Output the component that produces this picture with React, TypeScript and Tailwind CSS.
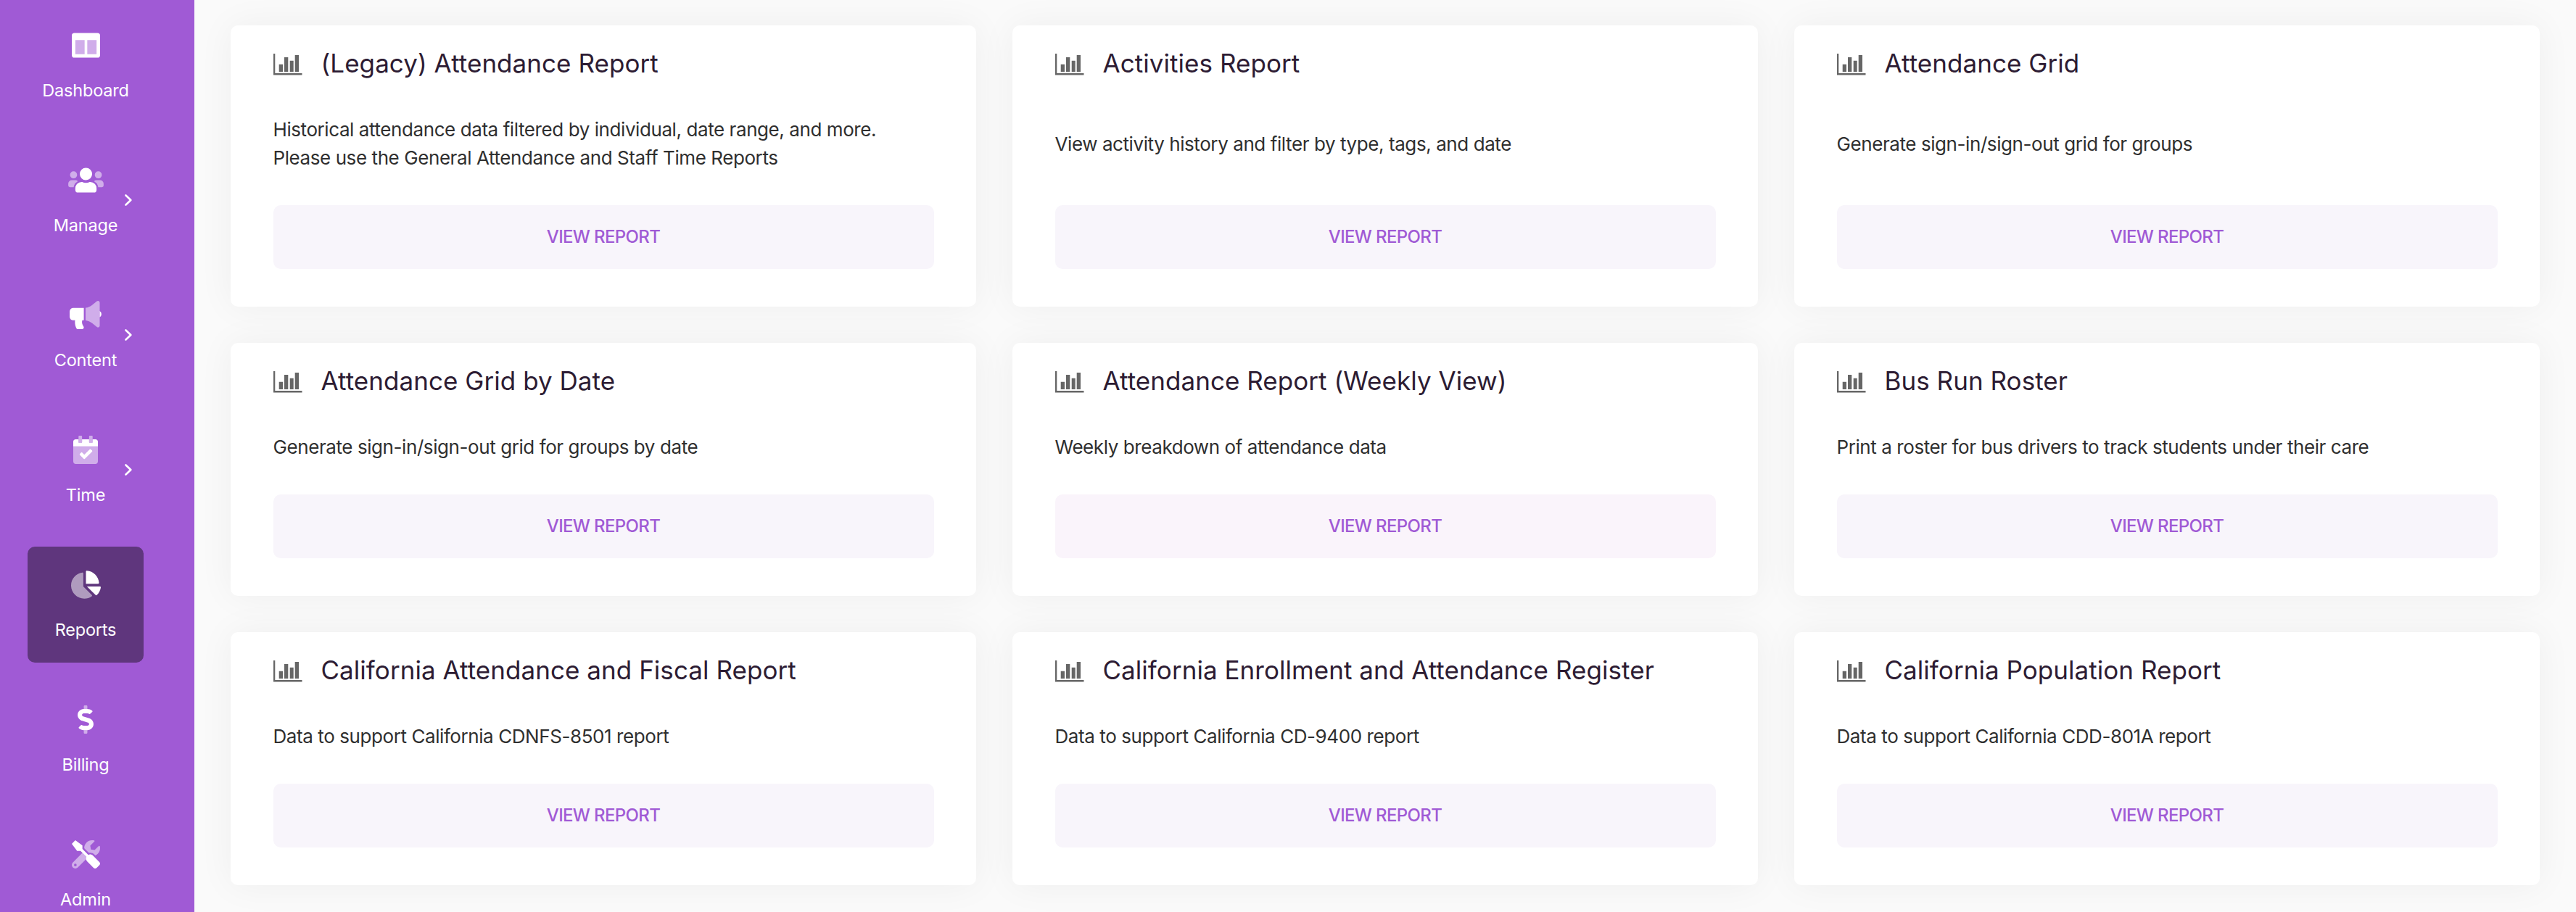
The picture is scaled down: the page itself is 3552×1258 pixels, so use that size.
import type { ReactNode } from 'react';
import clsx from 'clsx';

type IconProps = {
  viewBox: string;
  className: string;
  primary: ReactNode;
  secondary: ReactNode;
};

function DuotoneIcon({ viewBox, className, primary, secondary }: IconProps) {
  return (
    <svg viewBox={viewBox} className={clsx('h-[39px]', className)} fill="currentColor">
      <g opacity="0.5">{secondary}</g>
      <g>{primary}</g>
    </svg>
  );
}

const dashboardIcon = (
  <DuotoneIcon
    viewBox="0 0 512 512"
    className="w-[39px]"
    secondary={<path d="M56 152h184v272H56zM272 152h184v272H272z" />}
    primary={
      <path
        fillRule="evenodd"
        d="M464 32H48a48 48 0 0 0-48 48v352a48 48 0 0 0 48 48h416a48 48 0 0 0 48-48V80a48 48 0 0 0-48-48zM232 416H64V160h168zm216 0H280V160h168z"
      />
    }
  />
);

const manageIcon = (
  <DuotoneIcon
    viewBox="0 0 640 512"
    className="w-[49px]"
    secondary={
      <path d="M96 224a64 64 0 1 0-64-64 64.06 64.06 0 0 0 64 64zm480 32h-64a63.81 63.81 0 0 0-45.1 18.6A146.27 146.27 0 0 1 542 384h66a32 32 0 0 0 32-32v-32a64.06 64.06 0 0 0-64-64zm-512 0a64.06 64.06 0 0 0-64 64v32a32 32 0 0 0 32 32h65.9a146.64 146.64 0 0 1 75.2-109.4A63.81 63.81 0 0 0 128 256zm480-32a64 64 0 1 0-64-64 64.06 64.06 0 0 0 64 64z" />
    }
    primary={
      <path d="M396.8 288h-8.3a157.53 157.53 0 0 1-68.5 16c-24.6 0-47.6-6-68.5-16h-8.3A115.23 115.23 0 0 0 128 403.2V432a48 48 0 0 0 48 48h288a48 48 0 0 0 48-48v-28.8A115.23 115.23 0 0 0 396.8 288zM320 256a112 112 0 1 0-112-112 111.94 111.94 0 0 0 112 112z" />
    }
  />
);

const contentIcon = (
  <DuotoneIcon
    viewBox="0 0 576 512"
    className="w-[44px]"
    secondary={
      <path d="M544 32c0-8.700-7-32-32-32a32 32 0 0 0-20 7l-85 68c-34.500 27.600-76 45-119 51v228c43 6 84.500 23.400 119 51l85 68a32 32 0 0 0 20 7c25 0 32-22.800 32-32z" />
    }
    primary={
      <path d="M544 184.900v110.200a63.500 63.500 0 0 0 0-110.200zM0 192v96a64 64 0 0 0 64 64h33.700a243 243 0 0 0-2.200 32c0 39.800 9.300 77.400 25.600 110.900 5.200 10.700 16.500 17.100 28.400 17.100h74.300c26 0 41.700-29.800 25.900-50.600a127.300 127.300 0 0 1-21.800-109.400H256V128H64a64 64 0 0 0-64 64z" />
    }
  />
);

const timeIcon = (
  <DuotoneIcon
    viewBox="0 0 448 512"
    className="w-[34px]"
    secondary={
      <path
        fillRule="evenodd"
        d="M0 192v272a48 48 0 0 0 48 48h352a48 48 0 0 0 48-48V192zm345.300 95.900L209 423.100a12 12 0 0 1-17 0l-75.700-76.300a12 12 0 0 1 .1-17l28.400-28.100a12 12 0 0 1 17 .1l39 39.300 99.800-99a12 12 0 0 1 17 .1l28.100 28.400a12 12 0 0 1-.4 17.300zM108 0h40a12 12 0 0 1 12 12v104a12 12 0 0 1-12 12h-40a12 12 0 0 1-12-12V12a12 12 0 0 1 12-12zM300 0h40a12 12 0 0 1 12 12v104a12 12 0 0 1-12 12h-40a12 12 0 0 1-12-12V12a12 12 0 0 1 12-12z"
      />
    }
    primary={
      <path d="M345.300 287.900L209 423.100a12 12 0 0 1-17 0l-75.700-76.300a12 12 0 0 1 .1-17l28.400-28.100a12 12 0 0 1 17 .1l39 39.300 99.800-99a12 12 0 0 1 17 .1l28.100 28.400a12 12 0 0 1-.4 17.300zM400 64h-48v52a12 12 0 0 1-12 12h-40a12 12 0 0 1-12-12V64H160v52a12 12 0 0 1-12 12h-40a12 12 0 0 1-12-12V64H48a48 48 0 0 0-48 48v80h448v-80a48 48 0 0 0-48-48z" />
    }
  />
);

const reportsIcon = (
  <DuotoneIcon
    viewBox="0 0 544 512"
    className="w-[41px]"
    secondary={
      <path d="M224 288V50.710c0-9.550-8.390-17.400-17.840-16.060C86.990 51.490-4.100 155.600.14 280.370 4.500 408.510 114.830 513.590 243.030 511.980c50.400-.63 96.970-16.870 135.260-44.030 7.900-5.600 8.420-17.230 1.570-24.080L224 288z" />
    }
    primary={
      <path d="M527.790 288H290.500l158.030 158.030c6.040 6.040 15.980 6.530 22.190.68 38.700-36.460 65.320-85.610 73.130-140.860 1.340-9.460-6.510-17.850-16.060-17.850zM511.960 223.200C503.720 103.740 408.260 8.280 288.800.04 279.680-.59 272 7.100 272 16.240V240h223.770c9.140 0 16.820-7.680 16.190-16.800z" />
    }
  />
);

const billingIcon = (
  <DuotoneIcon
    viewBox="0 0 288 512"
    className="w-[22px]"
    secondary={
      <path d="M112 64V16a16 16 0 0 1 16-16h32a16 16 0 0 1 16 16v48zM112 448v48a16 16 0 0 0 16 16h32a16 16 0 0 0 16-16v-48z" />
    }
    primary={
      <path d="M209.200 233.400l-108-31.600C88.700 198.200 80 186.500 80 173.500c0-16.300 13.200-29.500 29.500-29.500h66.300c12.200 0 24.200 3.700 34.200 10.500 6.100 4.100 14.300 3.100 19.500-2l34.800-34c7.100-6.900 6.100-18.400-1.800-24.500C238 74.800 207.400 64.100 176 64h-66.500C45.800 64-5.400 118.700.5 183.600c4.200 46.100 39.400 83.600 83.800 96.600l102.500 30c12.500 3.700 21.200 15.300 21.200 28.300 0 16.300-13.200 29.500-29.500 29.500h-66.300C100 368 88 364.300 78 357.500c-6.100-4.100-14.300-3.100-19.500 2l-34.800 34c-7.100 6.900-6.100 18.400 1.800 24.500 24.500 19.200 55.100 29.900 86.500 30h64c46.600-.9 90.300-28.800 105.700-72.900 21.500-61.600-14.600-124.800-72.500-141.700z" />
    }
  />
);

const adminIcon = (
  <DuotoneIcon
    viewBox="0 0 512 512"
    className="w-[39px]"
    secondary={
      <path
        fillRule="evenodd"
        d="M331.700 225c28.300 0 54.900 11 74.900 31l19.400 19.400c15.800-6.900 30.800-16.500 43.800-29.500 37.100-37.100 49.700-89.300 37.900-136.700-2.200-9-13.500-12.100-20.100-5.500l-74.400 74.400-67.900-11.300L334 98.900l74.400-74.400c6.600-6.600 3.400-17.900-5.700-20.200-47.400-11.700-99.600.9-136.600 37.900-28.500 28.500-41.900 66.100-41.200 103.600l82.100 82.100c8.100-1.900 16.500-2.900 24.700-2.900zM264.700 298.600l-70.900-70.900L18.700 402.800c-25 25-25 65.500 0 90.500s65.500 25 90.500 0l148.600-148.600c-2.500-15.500-.3-31.500 6.900-46.100zM64 472a24 24 0 1 1 0-48 24 24 0 0 1 0 48z"
      />
    }
    primary={
      <path d="M501.100 395.700L384 278.600c-23.100-23.100-57.600-27.600-85.400-13.900L192 158.100V96L64 0 0 64l96 128h62.100l106.600 106.600c-13.600 27.800-9.200 62.300 13.900 85.400l117.100 117.100c14.600 14.600 38.200 14.600 52.700 0l52.700-52.700c14.500-14.600 14.500-38.200 0-52.700z" />
    }
  />
);

type NavItem = {
  label: string;
  icon: ReactNode;
  hasMenu?: boolean;
  active?: boolean;
};

const navItems: NavItem[] = [
  { label: 'Dashboard', icon: dashboardIcon },
  { label: 'Manage', icon: manageIcon, hasMenu: true },
  { label: 'Content', icon: contentIcon, hasMenu: true },
  { label: 'Time', icon: timeIcon, hasMenu: true },
  { label: 'Reports', icon: reportsIcon, active: true },
  { label: 'Billing', icon: billingIcon },
  { label: 'Admin', icon: adminIcon },
];

type Report = {
  title: string;
  description: string;
  hovered?: boolean;
};

const reports: Report[] = [
  {
    title: '(Legacy) Attendance Report',
    description:
      'Historical attendance data filtered by individual, date range, and more.\nPlease use the General Attendance and Staff Time Reports',
  },
  { title: 'Activities Report', description: 'View activity history and filter by type, tags, and date' },
  { title: 'Attendance Grid', description: 'Generate sign-in/sign-out grid for groups' },
  { title: 'Attendance Grid by Date', description: 'Generate sign-in/sign-out grid for groups by date' },
  {
    title: 'Attendance Report (Weekly View)',
    description: 'Weekly breakdown of attendance data',
    hovered: true,
  },
  { title: 'Bus Run Roster', description: 'Print a roster for bus drivers to track students under their care' },
  {
    title: 'California Attendance and Fiscal Report',
    description: 'Data to support California CDNFS-8501 report',
  },
  {
    title: 'California Enrollment and Attendance Register',
    description: 'Data to support California CD-9400 report',
  },
  { title: 'California Population Report', description: 'Data to support California CDD-801A report' },
];

function SidebarItem({ label, icon, hasMenu, active }: NavItem) {
  return (
    <a
      className={clsx(
        'relative flex h-40 w-40 shrink-0 flex-col items-center rounded-[10px] pt-[33px] text-white',
        active && 'bg-[#5f367d]',
      )}
    >
      {icon}
      <span className="mt-[25px] text-[23.5px] leading-9 tracking-[-0.2px]">{label}</span>
      {hasMenu && (
        <svg
          viewBox="0 0 10 16"
          className="absolute top-[71.5px] left-[133.5px] h-4 w-[10px]"
          fill="none"
          stroke="currentColor"
          strokeWidth="2.6"
          strokeLinecap="round"
          strokeLinejoin="round"
        >
          <path d="M1.500 1.500L8.300 8l-6.800 6.500" />
        </svg>
      )}
    </a>
  );
}

function ReportCard({ title, description, hovered }: Report) {
  return (
    <div className="flex flex-col rounded-[10px] bg-white px-[58.5px] pt-[25px] pb-[52px] shadow-[0_0_50px_rgba(0,0,0,0.05)]">
      <div className="flex h-[54px] items-center">
        <svg viewBox="0 0 40 30" className="mt-[3px] h-[30px] w-10 shrink-0" fill="#666">
          <path d="M0 0h2.300v27H39.500v2.500H0zM7.700 14.700H13V25H7.700zM15 5h5.300v20H15zM22.700 9.700h5V25h-5zM29.700 2H35v23h-5.300z" />
        </svg>
        <h3 className="ml-[26px] text-[35px] tracking-[0.05px] whitespace-nowrap text-[#2d1c33]">{title}</h3>
      </div>
      <p className="flex flex-1 items-center text-[26px] leading-[39px] tracking-[-0.42px] whitespace-pre text-[#2f2f2f]">
        {description}
      </p>
      <button
        className={clsx(
          'h-[88.5px] rounded-[10px] text-[24px] font-medium tracking-[-0.65px] text-[#a05ad5]',
          hovered ? 'bg-[#faf4fb]' : 'bg-[#f8f5fb]',
        )}
      >
        VIEW REPORT
      </button>
    </div>
  );
}

export default function App() {
  return (
    <div className="flex h-[1258px] w-[3552px] overflow-hidden bg-[#fafafa] font-['Inter',sans-serif]">
      <nav className="z-10 flex w-[268px] shrink-0 flex-col gap-[26px] bg-[#a05ad5] pt-[10px] pl-[38px]">
        {navItems.map((item) => (
          <SidebarItem key={item.label} {...item} />
        ))}
      </nav>
      <main className="grid flex-1 grid-cols-3 grid-rows-[388px_349px_349px] gap-[50px] px-[50px] pt-[35px]">
        {reports.map((report) => (
          <ReportCard key={report.title} {...report} />
        ))}
      </main>
    </div>
  );
}
